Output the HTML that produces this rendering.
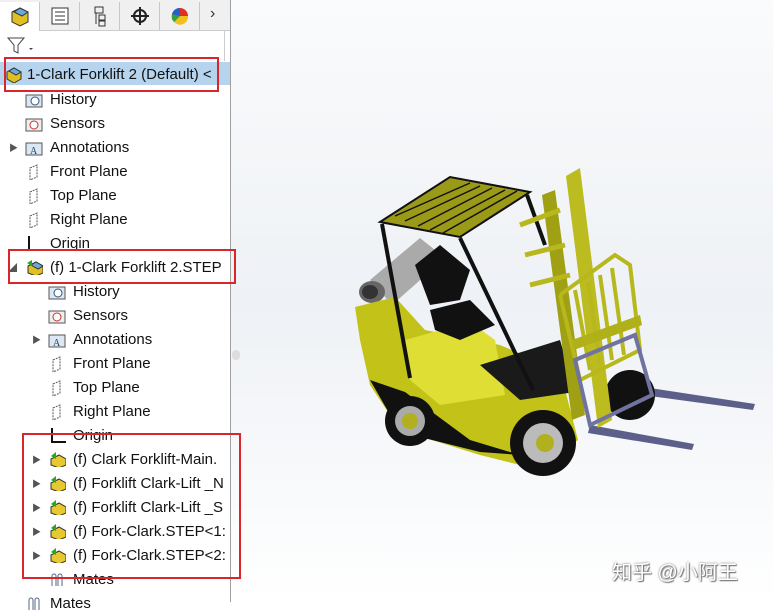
<!DOCTYPE html>
<html><head><meta charset="utf-8"><style>
body{margin:0;width:773px;height:602px;overflow:hidden;background:#fff;font-family:"Liberation Sans","Noto Sans CJK SC",sans-serif;position:relative}
#vp{position:absolute;left:231px;top:0;width:542px;height:602px;background:linear-gradient(180deg,#fafbfc 0%,#eef1f5 50%,#fff 100%)}
#panel{position:absolute;left:0;top:0;width:230px;height:602px;background:#fff;border-right:1px solid #a0a0a0}
.tabs{position:absolute;left:0;top:0;width:230px;height:30px;background:#f0f0f0;border-bottom:1px solid #ccc}
.tab{position:absolute;top:2px;width:39px;height:28px;border-right:1px solid #c8c8c8}
.row{position:absolute;height:24px;line-height:24px;font-size:15px;color:#111;white-space:nowrap}
.ic{position:absolute;width:18px;height:16px}
.arr{position:absolute;font-size:9px;color:#555}
.red{position:absolute;border:2px solid #d9262b}
#rows{position:absolute;left:0;top:2px;width:230px;height:600px}
</style></head><body>
<div id="vp">
<svg width="542" height="602" viewBox="231 0 542 602" style="position:absolute;left:0;top:0">
<polygon points="650,388 755,404 753,410 650,396" fill="#5c5f8a"/>
<polygon points="590,425 694,444 692,450 588,433" fill="#5c5f8a"/>
<!-- tank -->
<polygon points="370,280 420,238 445,258 392,305" fill="#aaa"/>
<ellipse cx="372" cy="292" rx="13" ry="11" fill="#666"/>
<ellipse cx="370" cy="292" rx="8" ry="7" fill="#333"/>
<!-- body -->
<polygon points="355,307 395,297 425,330 500,345 560,370 578,440 540,470 480,455 400,430 370,385 360,340" fill="#c2c218"/>
<polygon points="405,340 470,322 495,340 505,395 440,405 410,380" fill="#dede35"/>
<polygon points="370,380 405,392 470,440 520,455 480,452 400,432" fill="#111"/>
<polygon points="480,365 560,340 575,392 520,400" fill="#1a1a1a"/>
<!-- seat -->
<polygon points="415,265 440,245 470,270 460,300 430,305" fill="#111"/>
<polygon points="430,310 470,300 495,325 460,340 435,330" fill="#111"/>
<!-- canopy -->
<polygon points="380,222 450,177 530,192 460,237" fill="#9a9a18" stroke="#111" stroke-width="2"/>
<g stroke="#111" stroke-width="1.5"><line x1="395" y1="216" x2="470" y2="183"/><line x1="405" y1="221" x2="480" y2="186"/><line x1="418" y1="226" x2="492" y2="188"/><line x1="430" y1="230" x2="505" y2="190"/><line x1="443" y1="233" x2="517" y2="191"/></g>
<g stroke="#111" stroke-width="4"><line x1="382" y1="224" x2="410" y2="378"/><line x1="460" y1="238" x2="533" y2="390"/><line x1="527" y1="195" x2="545" y2="245"/></g>
<!-- wheels -->
<circle cx="410" cy="421" r="25" fill="#111"/><circle cx="410" cy="421" r="15" fill="#aaa"/><circle cx="410" cy="421" r="8" fill="#b0b020"/>
<circle cx="543" cy="443" r="33" fill="#111"/><circle cx="543" cy="443" r="20" fill="#bbb"/><circle cx="545" cy="443" r="9" fill="#b0b020"/>
<circle cx="630" cy="395" r="25" fill="#111"/>
<!-- mast -->
<polygon points="566,176 580,168 612,420 598,428" fill="#bcbc20"/>
<polygon points="542,195 555,190 585,415 572,420" fill="#a0a014"/>
<g stroke="#b8b81c" stroke-width="5"><line x1="520" y1="225" x2="560" y2="210"/><line x1="525" y1="255" x2="565" y2="245"/><line x1="530" y1="285" x2="570" y2="275"/></g>
<g stroke="#b8b81c" stroke-width="4" fill="none"><polyline points="560,295 615,255 630,265 640,350 580,380 560,295"/><line x1="575" y1="290" x2="590" y2="370"/><line x1="588" y1="282" x2="600" y2="365"/><line x1="600" y1="275" x2="612" y2="360"/><line x1="612" y1="268" x2="624" y2="355"/></g>
<polygon points="575,360 635,335 652,395 590,425" fill="none" stroke="#7072a0" stroke-width="4"/>
<polygon points="572,340 640,315 642,325 574,350" fill="#b0b018"/>
</svg>
<div style="position:absolute;left:381px;top:556px;font-size:20px;color:#fff;text-shadow:0 0 2px #666,1px 1px 1px #777">知乎 @小阿王</div>
<div style="position:absolute;left:1px;top:350px;width:8px;height:10px;background:#ddd;border-radius:4px"></div>
</div>
<div id="panel">
<div class="tabs">
<div class="tab" style="left:0;background:#fff;height:29px"><svg width="39" height="28"><polygon points="12,10 20,6 28,10 28,20 20,24 12,20" fill="#e0c020" stroke="#333"/><polygon points="20,6 28,10 22,14 14,10" fill="#6aa8e0" stroke="#333"/></svg></div>
<div class="tab" style="left:40px"><svg width="39" height="28"><rect x="12" y="6" width="16" height="16" fill="#fff" stroke="#333"/><g stroke="#333"><line x1="15" y1="10" x2="25" y2="10"/><line x1="15" y1="14" x2="25" y2="14"/><line x1="15" y1="18" x2="25" y2="18"/></g></svg></div>
<div class="tab" style="left:80px"><svg width="39" height="28"><rect x="15" y="5" width="8" height="6" fill="none" stroke="#333"/><rect x="19" y="13" width="6" height="5" fill="none" stroke="#333"/><rect x="19" y="19" width="6" height="5" fill="none" stroke="#333"/><line x1="16" y1="11" x2="16" y2="22" stroke="#333"/></svg></div>
<div class="tab" style="left:120px"><svg width="39" height="28"><circle cx="20" cy="14" r="6" fill="none" stroke="#222" stroke-width="2"/><line x1="20" y1="5" x2="20" y2="23" stroke="#222" stroke-width="2"/><line x1="11" y1="14" x2="29" y2="14" stroke="#222" stroke-width="2"/></svg></div>
<div class="tab" style="left:160px"><svg width="39" height="28"><circle cx="20" cy="14" r="8" fill="#e03020"/><path d="M20 14 L28 14 A8 8 0 0 1 14 20Z" fill="#f0c020"/><path d="M20 14 L14 20 A8 8 0 0 1 12 12Z" fill="#30a040"/><path d="M20 14 L20 6 A8 8 0 0 0 12 12Z" fill="#2060d0"/></svg></div>
<div style="position:absolute;left:210px;top:5px;font-size:16px;color:#333">›</div>
</div>
<svg style="position:absolute;left:7px;top:36px" width="28" height="20"><path d="M1 2 H17 L11 9 V17 L7 15 V9Z" fill="#fff" stroke="#444"/><path d="M22 12 l4 0 l-2 2z" fill="#444"/></svg>
<div style="position:absolute;left:224px;top:31px;width:1px;height:30px;background:#ccc"></div>
<div style="position:absolute;left:0;top:62px;width:230px;height:23px;background:#b6d4ee"></div>
<div id="rows">
<div class="row" style="left:5px;top:61px"><svg class="ic" style="left:0;top:4px" width="18" height="16"><polygon points="2,5 9,1 16,5 16,12 9,16 2,12" fill="#e0c020" stroke="#333"/><polygon points="9,1 16,5 11,8 4,4" fill="#6aa8e0" stroke="#333"/></svg><span style="position:absolute;left:22px">1-Clark Forklift 2 (Default) &lt;</span></div>
<div class="row" style="left:25px;top:86px"><svg class="ic" width="18" height="16" style="top:4px"><rect x="1" y="3" width="16" height="12" fill="#dbe8f4" stroke="#555"/><circle cx="10" cy="9" r="4" fill="#fff" stroke="#357"/></svg><span style="position:absolute;left:25px">History</span></div>
<div class="row" style="left:25px;top:110px"><svg class="ic" width="18" height="16" style="top:4px"><rect x="1" y="3" width="16" height="12" fill="#eee" stroke="#555"/><circle cx="9" cy="9" r="4" fill="#fff" stroke="#c33"/></svg><span style="position:absolute;left:25px">Sensors</span></div>
<div class="arr" style="left:9px;top:139px">▶</div>
<div class="row" style="left:25px;top:134px"><svg class="ic" width="18" height="16" style="top:4px"><rect x="1" y="3" width="16" height="12" fill="#dbe8f4" stroke="#555"/><text x="5" y="14" font-size="10" fill="#246" font-family="Liberation Serif">A</text></svg><span style="position:absolute;left:25px">Annotations</span></div>
<div class="row" style="left:25px;top:158px"><svg class="ic" width="18" height="16" style="top:4px"><path d="M5 4 L12 1 V13 L5 16Z" fill="none" stroke="#555" stroke-dasharray="2 1"/></svg><span style="position:absolute;left:25px">Front Plane</span></div>
<div class="row" style="left:25px;top:182px"><svg class="ic" width="18" height="16" style="top:4px"><path d="M5 4 L12 1 V13 L5 16Z" fill="none" stroke="#555" stroke-dasharray="2 1"/></svg><span style="position:absolute;left:25px">Top Plane</span></div>
<div class="row" style="left:25px;top:206px"><svg class="ic" width="18" height="16" style="top:4px"><path d="M5 4 L12 1 V13 L5 16Z" fill="none" stroke="#555" stroke-dasharray="2 1"/></svg><span style="position:absolute;left:25px">Right Plane</span></div>
<div class="row" style="left:25px;top:230px"><svg class="ic" width="20" height="18" style="top:3px"><path d="M4 1 V15 H18" fill="none" stroke="#111" stroke-width="2"/></svg><span style="position:absolute;left:25px">Origin</span></div>
<div class="arr" style="left:8px;top:259px">◢</div>
<div class="row" style="left:25px;top:254px"><svg class="ic" width="20" height="18" style="top:3px"><polygon points="3,7 11,3 18,7 18,14 11,17 3,14" fill="#e0c020" stroke="#333"/><polygon points="11,3 18,7 13,10 6,6" fill="#6aa8e0" stroke="#333"/><path d="M2 4 L7 1 V7Z" fill="#2a2"/></svg><span style="position:absolute;left:25px">(f) 1-Clark Forklift 2.STEP</span></div>
<div class="row" style="left:48px;top:278px"><svg class="ic" width="18" height="16" style="top:4px"><rect x="1" y="3" width="16" height="12" fill="#dbe8f4" stroke="#555"/><circle cx="10" cy="9" r="4" fill="#fff" stroke="#357"/></svg><span style="position:absolute;left:25px">History</span></div>
<div class="row" style="left:48px;top:302px"><svg class="ic" width="18" height="16" style="top:4px"><rect x="1" y="3" width="16" height="12" fill="#eee" stroke="#555"/><circle cx="9" cy="9" r="4" fill="#fff" stroke="#c33"/></svg><span style="position:absolute;left:25px">Sensors</span></div>
<div class="arr" style="left:32px;top:331px">▶</div>
<div class="row" style="left:48px;top:326px"><svg class="ic" width="18" height="16" style="top:4px"><rect x="1" y="3" width="16" height="12" fill="#dbe8f4" stroke="#555"/><text x="5" y="14" font-size="10" fill="#246" font-family="Liberation Serif">A</text></svg><span style="position:absolute;left:25px">Annotations</span></div>
<div class="row" style="left:48px;top:350px"><svg class="ic" width="18" height="16" style="top:4px"><path d="M5 4 L12 1 V13 L5 16Z" fill="none" stroke="#555" stroke-dasharray="2 1"/></svg><span style="position:absolute;left:25px">Front Plane</span></div>
<div class="row" style="left:48px;top:374px"><svg class="ic" width="18" height="16" style="top:4px"><path d="M5 4 L12 1 V13 L5 16Z" fill="none" stroke="#555" stroke-dasharray="2 1"/></svg><span style="position:absolute;left:25px">Top Plane</span></div>
<div class="row" style="left:48px;top:398px"><svg class="ic" width="18" height="16" style="top:4px"><path d="M5 4 L12 1 V13 L5 16Z" fill="none" stroke="#555" stroke-dasharray="2 1"/></svg><span style="position:absolute;left:25px">Right Plane</span></div>
<div class="row" style="left:48px;top:422px"><svg class="ic" width="20" height="18" style="top:3px"><path d="M4 1 V15 H18" fill="none" stroke="#111" stroke-width="2"/></svg><span style="position:absolute;left:25px">Origin</span></div>
<div class="arr" style="left:32px;top:451px">▶</div>
<div class="row" style="left:48px;top:446px"><svg class="ic" width="20" height="18" style="top:3px"><polygon points="3,8 11,4 18,8 18,14 11,17 3,14" fill="#e8c830" stroke="#333"/><path d="M3 5 L8 1 V8Z" fill="#2a2"/></svg><span style="position:absolute;left:25px">(f) Clark Forklift-Main.</span></div>
<div class="arr" style="left:32px;top:475px">▶</div>
<div class="row" style="left:48px;top:470px"><svg class="ic" width="20" height="18" style="top:3px"><polygon points="3,8 11,4 18,8 18,14 11,17 3,14" fill="#e8c830" stroke="#333"/><path d="M3 5 L8 1 V8Z" fill="#2a2"/></svg><span style="position:absolute;left:25px">(f) Forklift Clark-Lift _N</span></div>
<div class="arr" style="left:32px;top:499px">▶</div>
<div class="row" style="left:48px;top:494px"><svg class="ic" width="20" height="18" style="top:3px"><polygon points="3,8 11,4 18,8 18,14 11,17 3,14" fill="#e8c830" stroke="#333"/><path d="M3 5 L8 1 V8Z" fill="#2a2"/></svg><span style="position:absolute;left:25px">(f) Forklift Clark-Lift _S</span></div>
<div class="arr" style="left:32px;top:523px">▶</div>
<div class="row" style="left:48px;top:518px"><svg class="ic" width="20" height="18" style="top:3px"><polygon points="3,8 11,4 18,8 18,14 11,17 3,14" fill="#e8c830" stroke="#333"/><path d="M3 5 L8 1 V8Z" fill="#2a2"/></svg><span style="position:absolute;left:25px">(f) Fork-Clark.STEP&lt;1:</span></div>
<div class="arr" style="left:32px;top:547px">▶</div>
<div class="row" style="left:48px;top:542px"><svg class="ic" width="20" height="18" style="top:3px"><polygon points="3,8 11,4 18,8 18,14 11,17 3,14" fill="#e8c830" stroke="#333"/><path d="M3 5 L8 1 V8Z" fill="#2a2"/></svg><span style="position:absolute;left:25px">(f) Fork-Clark.STEP&lt;2:</span></div>
<div class="row" style="left:48px;top:566px"><svg class="ic" width="18" height="16" style="top:4px"><path d="M4 14 V4 a2 2 0 0 1 4 0 V14 M10 14 V4 a2 2 0 0 1 4 0 V14" fill="none" stroke="#568"/></svg><span style="position:absolute;left:25px">Mates</span></div>
<div class="row" style="left:25px;top:590px"><svg class="ic" width="18" height="16" style="top:4px"><path d="M4 14 V4 a2 2 0 0 1 4 0 V14 M10 14 V4 a2 2 0 0 1 4 0 V14" fill="none" stroke="#568"/></svg><span style="position:absolute;left:25px">Mates</span></div>
</div>
<div class="red" style="left:4px;top:57px;width:211px;height:31px"></div>
<div class="red" style="left:8px;top:249px;width:224px;height:31px"></div>
<div class="red" style="left:22px;top:433px;width:215px;height:142px"></div>
</div>
</body></html>
